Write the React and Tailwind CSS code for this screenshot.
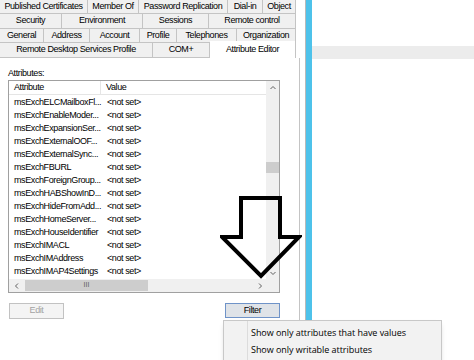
import React from 'react';

const tabRows = [
  [
    ['Published Certificates', 88],
    ['Member Of', 51],
    ['Password Replication', 89],
    ['Dial-in', 35],
    ['Object', 33],
  ],
  [
    ['Security', 62],
    ['Environment', 81],
    ['Sessions', 66],
    ['Remote control', 87],
  ],
  [
    ['General', 44],
    ['Address', 46],
    ['Account', 50],
    ['Profile', 37],
    ['Telephones', 60],
    ['Organization', 59],
  ],
];

const rowHeights = ['h-[14px]', 'h-[15px]', 'h-[14px]'];

const attributes = [
  'msExchELCMailboxFl...',
  'msExchEnableModer...',
  'msExchExpansionSer...',
  'msExchExternalOOF...',
  'msExchExternalSync...',
  'msExchFBURL',
  'msExchForeignGroup...',
  'msExchHABShowInD...',
  'msExchHideFromAdd...',
  'msExchHomeServer...',
  'msExchHouseIdentifier',
  'msExchIMACL',
  'msExchIMAddress',
  'msExchIMAP4Settings',
];

const Chevron = ({ dir }) => {
  const d = {
    up: 'M1.5 5 L4 2.5 L6.5 5',
    down: 'M1.5 3 L4 5.5 L6.5 3',
    left: 'M5 1.5 L2.5 4 L5 6.5',
    right: 'M3 1.5 L5.5 4 L3 6.5',
  }[dir];
  return (
    <svg width="8" height="8" viewBox="0 0 8 8">
      <path d={d} fill="none" stroke="#606060" strokeWidth="1" />
    </svg>
  );
};

const Tab = ({ label, width, height }) => (
  <div
    className={`${height} shrink-0 flex items-center justify-center border-r border-b border-[#c4c4c4] bg-[#f0f0f0]`}
    style={{ width }}
  >
    {label}
  </div>
);

export default function App() {
  return (
    <div
      className="relative w-[474px] h-[360px] overflow-hidden bg-white flex text-[9px] tracking-[-0.4px] text-black"
      style={{ fontFamily: '"Liberation Sans", Arial, sans-serif' }}
    >
      {/* dialog */}
      <div className="w-[306px] shrink-0 flex flex-col border-r border-[#b9b9b9]">
        {tabRows.map((row, i) => (
          <div key={i} className="flex">
            {row.map(([label, w]) => (
              <Tab key={label} label={label} width={w} height={rowHeights[i]} />
            ))}
          </div>
        ))}
        <div className="flex h-[15px]">
          <Tab label="Remote Desktop Services Profile" width={153} height="h-[15px]" />
          <Tab label="COM+" width={57} height="h-[15px]" />
          <div className="w-[86px] -mt-[2px] h-[17px] flex justify-center pt-[2px] bg-white border-r border-[#c4c4c4]">
            Attribute Editor
          </div>
        </div>

        {/* pane */}
        <div className="w-[300px] flex-1 border-r border-[#c4c4c4] flex flex-col px-[8px]">
          <div className="mt-[9px] h-[12px] leading-[12px]">Attributes:</div>

          <div className="mt-[1px] w-[272px] h-[213px] border border-[#a0a0a0] flex flex-col">
            <div className="flex flex-1 min-h-0">
              <div className="flex-1 flex flex-col">
                <div className="h-[14px] flex border-b border-[#e5e5e5]">
                  <div className="w-[92px] pl-[5px] flex items-center border-r border-[#e5e5e5]">Attribute</div>
                  <div className="pl-[5px] flex items-center">Value</div>
                </div>
                <div className="pt-[1px]">
                  {attributes.map((a) => (
                    <div key={a} className="h-[13px] flex items-center">
                      <div className="w-[92px] pl-[5px] whitespace-nowrap">{a}</div>
                      <div className="pl-[6px] whitespace-nowrap">&lt;not set&gt;</div>
                    </div>
                  ))}
                </div>
              </div>
              {/* vertical scrollbar */}
              <div className="w-[13px] bg-[#f0f0f0] flex flex-col">
                <div className="h-[14px] flex items-center justify-center">
                  <Chevron dir="up" />
                </div>
                <div className="flex-1 flex flex-col">
                  <div className="h-[67px]" />
                  <div className="h-[11px] bg-[#cdcdcd]" />
                </div>
                <div className="h-[13px] flex items-center justify-center">
                  <Chevron dir="down" />
                </div>
              </div>
            </div>
            {/* horizontal scrollbar */}
            <div className="h-[13px] flex bg-[#f0f0f0]">
              <div className="w-[16px] flex items-center justify-center">
                <Chevron dir="left" />
              </div>
              <div className="w-[123px] my-[1px] bg-[#cdcdcd] flex items-center justify-center text-[7px] text-[#606060] tracking-[0px]">
                III
              </div>
              <div className="flex-1" />
              <div className="w-[13px] flex items-center justify-center">
                <Chevron dir="right" />
              </div>
              <div className="w-[13px] bg-[#f0f0f0]" />
            </div>
          </div>

          <div className="mt-[10px] flex justify-between w-[272px]">
            <div className="ml-[1px] w-[55px] h-[16px] border border-[#c2c2c2] bg-[#f4f4f4] text-[#a3a3a3] flex items-center justify-center">
              Edit
            </div>
            <div className="w-[55px] h-[15px] border border-[#6f93c8] bg-[#dfe3e8] flex items-center justify-center">
              Filter
            </div>
          </div>
        </div>
      </div>

      {/* blue bar */}
      <div className="w-[6px] shrink-0 bg-[#4ec2ea]" />

      {/* right area */}
      <div className="flex-1 flex flex-col">
        <div className="h-[46px]" />
        <div className="h-[13px] bg-[#ececec]" />
      </div>

      {/* annotation arrow */}
      <svg
        className="absolute left-[220px] top-[196px] pointer-events-none"
        width="82"
        height="84"
        viewBox="0 0 82 84"
      >
        <polygon
          points="21,2 60,2 60,41 79,41 41,80 2,41 21,41"
          fill="none"
          stroke="#000"
          strokeWidth="4"
          strokeLinejoin="miter"
        />
      </svg>

      {/* filter menu */}
      <div
        className="absolute left-[223px] top-[320px] w-[219px] h-[50px] bg-[#f2f2f2] border border-[#c8c8c8] shadow-md flex text-[9px] tracking-[-0.05px]"
        style={{ fontFamily: '"Open Sans", "Noto Sans", sans-serif' }}
      >
        <div className="w-[24px] border-r border-[#dcdcdc]" />
        <div className="flex-1 flex flex-col pt-[3px] pl-[3px]">
          <div className="h-[17px] flex items-center">Show only attributes that have values</div>
          <div className="h-[17px] flex items-center">Show only writable attributes</div>
          <div className="mt-[2px] mr-[2px] border-t border-[#d6d6d6]" />
        </div>
      </div>
    </div>
  );
}
